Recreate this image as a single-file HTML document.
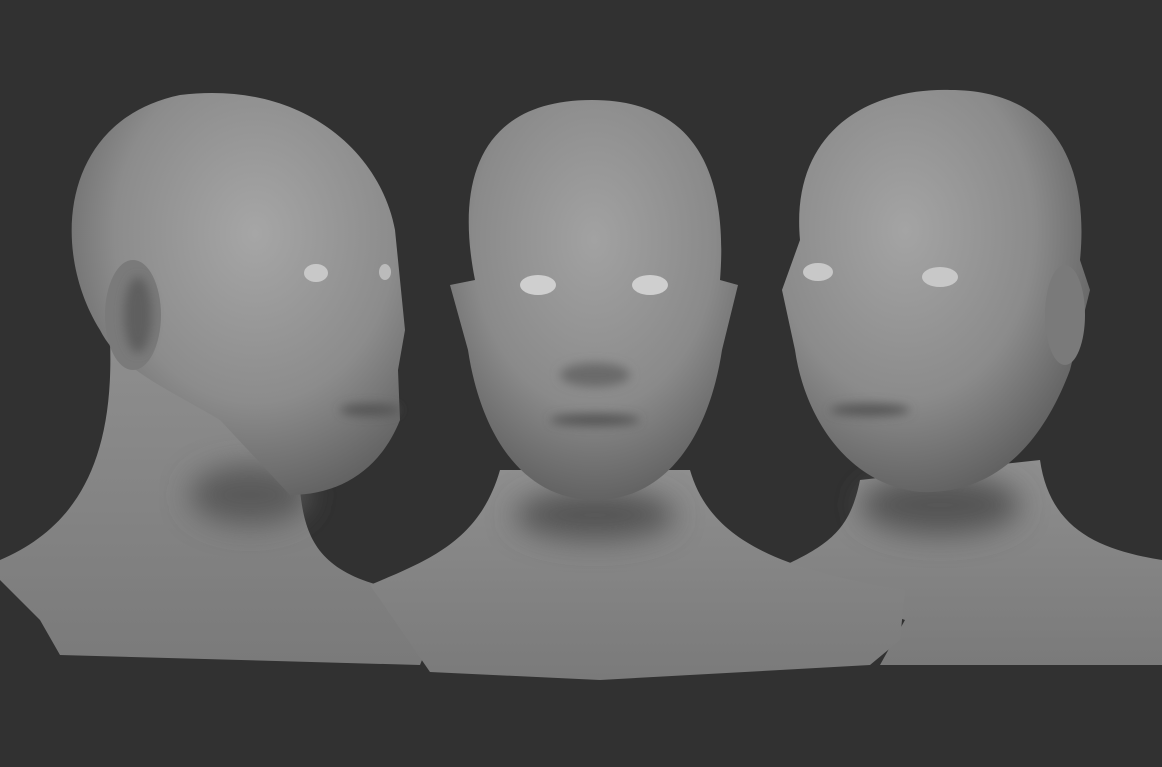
<!DOCTYPE html>
<html><head><meta charset="utf-8"><style>
html,body{margin:0;padding:0;background:#313131;}
svg{display:block}
</style></head><body>
<svg width="1162" height="767" viewBox="0 0 1162 767" xmlns="http://www.w3.org/2000/svg">
<defs>
<radialGradient id="hL" cx="0.55" cy="0.35" r="0.7"><stop offset="0" stop-color="#a6a6a6"/><stop offset="0.6" stop-color="#8c8c8c"/><stop offset="1" stop-color="#5e5e5e"/></radialGradient>
<radialGradient id="hM" cx="0.5" cy="0.35" r="0.7"><stop offset="0" stop-color="#a2a2a2"/><stop offset="0.6" stop-color="#8a8a8a"/><stop offset="1" stop-color="#5a5a5a"/></radialGradient>
<radialGradient id="hR" cx="0.4" cy="0.35" r="0.7"><stop offset="0" stop-color="#a4a4a4"/><stop offset="0.6" stop-color="#8b8b8b"/><stop offset="1" stop-color="#5c5c5c"/></radialGradient>
<linearGradient id="b" x1="0" y1="0" x2="0" y2="1"><stop offset="0" stop-color="#8e8e8e"/><stop offset="1" stop-color="#7a7a7a"/></linearGradient>
<filter id="bl" x="-100%" y="-100%" width="300%" height="300%"><feGaussianBlur stdDeviation="14"/></filter>
<filter id="bs" x="-100%" y="-100%" width="300%" height="300%"><feGaussianBlur stdDeviation="5"/></filter>
</defs>
<rect width="1162" height="767" fill="#313131"/>
<path d="M0,560 C70,530 115,470 110,340 L200,400 L260,440 L300,490 C305,540 320,575 400,590 L430,640 L420,665 L60,655 L40,620 L0,580 Z" fill="url(#b)"/>
<path d="M775,570 C830,545 850,530 860,480 L1040,460 C1050,530 1100,550 1162,560 L1162,665 L880,665 L905,620 Z" fill="url(#b)"/>
<path d="M370,585 C430,560 480,540 500,470 L690,470 C710,540 780,570 905,590 L900,640 L870,665 L600,680 L430,672 Z" fill="url(#b)"/>
<ellipse cx="250" cy="495" rx="60" ry="30" fill="#5a5a5a" filter="url(#bl)"/>
<ellipse cx="595" cy="515" rx="80" ry="25" fill="#555" filter="url(#bl)"/>
<ellipse cx="940" cy="505" rx="80" ry="30" fill="#555" filter="url(#bl)"/>
<path d="M100,330 C50,250 60,120 180,95 C300,80 380,150 395,230 L405,330 L398,370 L400,420 C380,470 340,495 290,495 L220,420 C170,390 120,370 100,330 Z" fill="url(#hL)"/>
<ellipse cx="133" cy="315" rx="28" ry="55" fill="#7a7a7a"/>
<ellipse cx="138" cy="315" rx="14" ry="38" fill="#5f5f5f" filter="url(#bs)"/>
<path d="M475,280 C455,180 480,100 592,100 C700,100 728,180 720,280 L738,285 L722,350 C710,430 670,500 595,500 C520,500 480,430 468,350 L450,285 Z" fill="url(#hM)"/>
<path d="M800,240 C790,130 870,88 950,90 C1050,90 1090,160 1080,260 L1090,290 L1070,370 C1040,450 990,495 920,492 C850,485 805,420 795,350 L782,290 Z" fill="url(#hR)"/>
<ellipse cx="1065" cy="315" rx="20" ry="50" fill="#7a7a7a"/>
<ellipse cx="316" cy="273" rx="12" ry="9" fill="#c8c8c8"/>
<ellipse cx="385" cy="272" rx="6" ry="8" fill="#bbb"/>
<ellipse cx="538" cy="285" rx="18" ry="10" fill="#cfcfcf"/>
<ellipse cx="650" cy="285" rx="18" ry="10" fill="#cfcfcf"/>
<ellipse cx="818" cy="272" rx="15" ry="9" fill="#c8c8c8"/>
<ellipse cx="940" cy="277" rx="18" ry="10" fill="#c8c8c8"/>
<ellipse cx="370" cy="410" rx="30" ry="6" fill="#555" filter="url(#bs)"/>
<ellipse cx="595" cy="420" rx="45" ry="6" fill="#555" filter="url(#bs)"/>
<ellipse cx="870" cy="410" rx="40" ry="6" fill="#555" filter="url(#bs)"/>
<ellipse cx="595" cy="375" rx="35" ry="12" fill="#6a6a6a" filter="url(#bs)"/>
</svg>
</body></html>
